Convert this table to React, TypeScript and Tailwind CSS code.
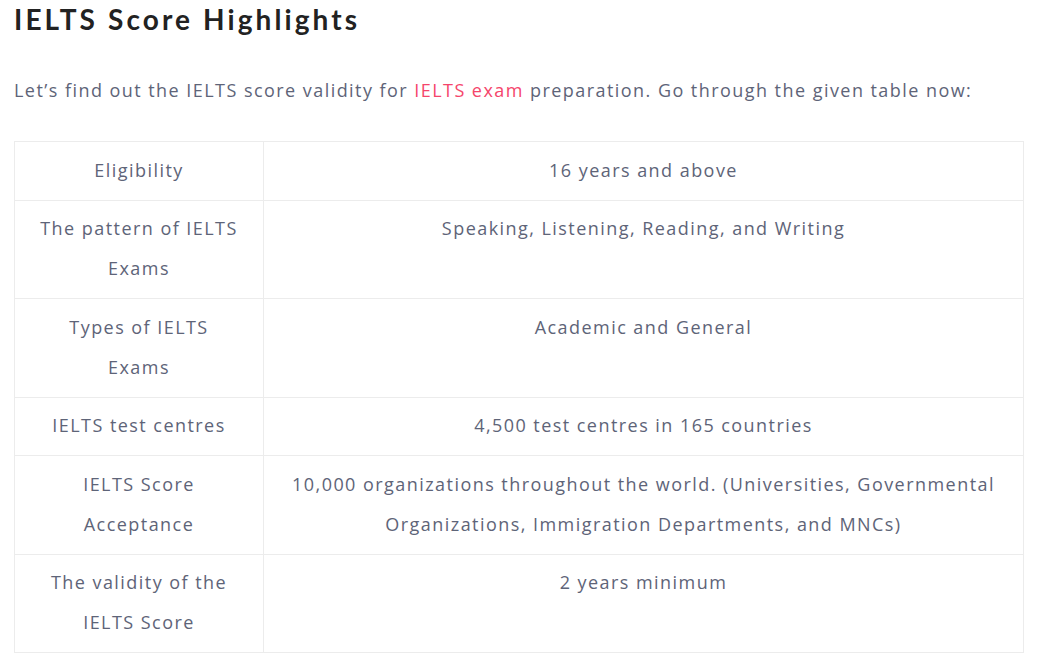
import React from "react";

const rows: [string[], string[]][] = [
  [["Eligibility"], ["16 years and above"]],
  [["The pattern of IELTS", "Exams"], ["Speaking, Listening, Reading, and Writing"]],
  [["Types of IELTS", "Exams"], ["Academic and General"]],
  [["IELTS test centres"], ["4,500 test centres in 165 countries"]],
  [["IELTS Score", "Acceptance"], ["10,000 organizations throughout the world. (Universities, Governmental", "Organizations, Immigration Departments, and MNCs)"]],
  [["The validity of the", "IELTS Score"], ["2 years minimum"]],
];

export default function App() {
  return (
    <div className="bg-white w-[1042px] h-[663px] overflow-hidden pl-[14px] pr-[18px]" style={{ fontFamily: "'Open Sans', sans-serif" }}>
      <h2 className="text-[28px] leading-[38px] font-bold text-[#222222] tracking-[3.1px] pt-0" style={{ fontFamily: "Lato, sans-serif" }}>
        IELTS Score Highlights
      </h2>
      <p className="mt-[38px] text-[18px] leading-[28px] text-[#5e6478] tracking-[1.45px] whitespace-nowrap">
        Let’s find out the IELTS score validity for <span className="text-[#f5456b]">IELTS exam</span> preparation. Go through the given table now:
      </p>
      <table className="mt-[37px] w-[1010px] border-collapse text-[18px] leading-[40px] text-[#5e6478] tracking-[1.45px]">
        <tbody>
          {rows.map(([a, b], i) => (
            <tr key={i}>
              <td className="w-[249px] border border-[#ececec] text-center align-top pt-[7.75px] pb-[9.75px] px-2">
                {a.map((l, j) => (
                  <div key={j} className="whitespace-nowrap">{l}</div>
                ))}
              </td>
              <td className="border border-[#ececec] text-center align-top pt-[7.75px] pb-[9.75px] px-2">
                {b.map((l, j) => (
                  <div key={j} className="whitespace-nowrap">{l}</div>
                ))}
              </td>
            </tr>
          ))}
        </tbody>
      </table>
    </div>
  );
}
